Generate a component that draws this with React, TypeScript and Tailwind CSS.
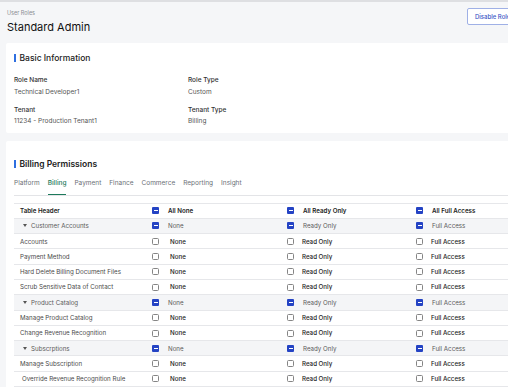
import React from 'react'

type Row = {
  label: string
  kind: 'header' | 'group' | 'leaf'
  indent?: boolean
}

const rows: Row[] = [
  { label: 'Table Header', kind: 'header' },
  { label: 'Customer Accounts', kind: 'group' },
  { label: 'Accounts', kind: 'leaf' },
  { label: 'Payment Method', kind: 'leaf' },
  { label: 'Hard Delete Billing Document Files', kind: 'leaf' },
  { label: 'Scrub Sensitive Data of Contact', kind: 'leaf' },
  { label: 'Product Catalog', kind: 'group' },
  { label: 'Manage Product Catalog', kind: 'leaf' },
  { label: 'Change Revenue Recognition', kind: 'leaf' },
  { label: 'Subscrptions', kind: 'group' },
  { label: 'Manage Subscription', kind: 'leaf' },
  { label: 'Override Revenue Recognition Rule', kind: 'leaf', indent: true },
]

const tabs = ['Platform', 'Billing', 'Payment', 'Finance', 'Commerce', 'Reporting', 'Insight']

function Check({ on }: { on: boolean }) {
  if (on) {
    return (
      <span className="flex items-center justify-center w-[7px] h-[7px] rounded-[1px] bg-[#2443c4] shrink-0">
        <span className="block w-[4px] h-[1px] bg-white" />
      </span>
    )
  }
  return <span className="block w-[7px] h-[7px] rounded-[1.5px] border border-[#858585] bg-white shrink-0" />
}

function Cell({ row, text, header, ml }: { row: Row; text: string; header: string; ml: string }) {
  const on = row.kind !== 'leaf'
  const label = row.kind === 'header' ? header : text
  const style =
    row.kind === 'group'
      ? 'text-[#5a5a5a] font-normal ml-[9px]'
      : row.kind === 'header'
        ? 'text-[#222] font-semibold ml-[9px]'
        : `text-[#1a1a1a] font-medium ${ml}`
  return (
    <div className="flex items-center pl-[2px]">
      <Check on={on} />
      <span className={style}>{label}</span>
    </div>
  )
}

function Field({ label, value }: { label: string; value: string }) {
  return (
    <div className="flex flex-col">
      <span className="text-[6.5px] leading-[9px] font-medium text-[#333]">{label}</span>
      <span className="text-[6.5px] leading-[9px] mt-[2.5px] text-[#555]">{value}</span>
    </div>
  )
}

export default function App() {
  return (
    <div className="w-[508px] h-[387px] overflow-hidden" style={{ fontFamily: 'Inter, "Liberation Sans", sans-serif' }}>
      <div className="w-[540px] min-h-[387px] bg-[#f5f6f8] border-t-2 border-[#dedfe2]">
        <div className="flex justify-between pl-[7px] pr-[11px] pt-[6px]">
          <div className="flex flex-col">
            <span className="text-[5.5px] leading-[8px] mt-[1px] text-[#8a8d93]">User Roles</span>
            <span className="text-[11px] leading-[14px] mt-[3px] text-[#111]">Standard Admin</span>
          </div>
          <button className="w-[62px] h-[17px] border border-[#9fb0e6] rounded-[2px] bg-white text-[6px] font-medium text-[#3a56c6] text-left pl-[7px] whitespace-nowrap">
            Disable Role
          </button>
        </div>

        <div className="ml-[6px] mt-[9px] bg-white rounded-[2px] h-[90px] pt-[10px] pl-[8px]">
          <div className="flex items-center h-[10px]">
            <span className="block w-[1.5px] h-[8px] bg-[#2f6fe0]" />
            <span className="ml-[4px] text-[8.5px] font-medium text-[#222]">Basic Information</span>
          </div>
          <div className="grid grid-cols-[174px_1fr] gap-y-[9px] mt-[13px]">
            <Field label="Role Name" value="Technical Developer1" />
            <Field label="Role Type" value="Custom" />
            <Field label="Tenant" value="11234 - Production Tenant1" />
            <Field label="Tenant Type" value="Billing" />
          </div>
        </div>

        <div className="ml-[6px] mt-[8px] bg-white rounded-[2px] pt-[18px] pl-[8px] h-[260px]">
          <div className="flex items-center h-[10px]">
            <span className="block w-[1.5px] h-[8px] bg-[#2f6fe0]" />
            <span className="ml-[4px] text-[8.5px] font-semibold text-[#222]">Billing Permissions</span>
          </div>
          <div className="flex gap-[8px] mt-[10px] border-b border-[#e3e4e7] text-[6.5px] text-[#6b6f76]">
            {tabs.map((t) => (
              <span
                key={t}
                className={
                  t === 'Billing'
                    ? 'h-[15.5px] leading-[8px] border-b-[1.5px] border-[#1d7a5b] text-[#1d7a5b] font-medium'
                    : 'h-[15.5px] leading-[8px]'
                }
              >
                {t}
              </span>
            ))}
          </div>
          <div className="mt-[7px] border-t border-[#e6e7ea] text-[6.2px]">
            {rows.map((r) => (
              <div
                key={r.label}
                className={`grid grid-cols-[136px_135px_129px_1fr] items-center h-[15.3px] border-b border-[#e6e7ea] ${
                  r.kind === 'group' ? 'bg-[#f4f5f7]' : 'bg-white'
                }`}
              >
                <div
                  className={`flex items-center ${
                    r.kind === 'group'
                      ? 'pl-[9px] text-[#5a5a5a]'
                      : r.kind === 'header'
                        ? 'pl-[6px] text-[#222] font-semibold'
                        : r.indent
                          ? 'pl-[8px] text-[#4a4a4a]'
                          : 'pl-[6px] text-[#4a4a4a]'
                  }`}
                >
                  {r.kind === 'group' && (
                    <svg width="4" height="3" viewBox="0 0 4 3" className="mr-[4px]">
                      <path d="M0 0H4L2 3Z" fill="#555" />
                    </svg>
                  )}
                  <span>{r.label}</span>
                </div>
                <Cell row={r} text="None" header="All None" ml="ml-[11px]" />
                <Cell row={r} text={r.kind === 'group' ? 'Ready Only' : 'Read Only'} header="All Ready Only" ml="ml-[8px]" />
                <Cell row={r} text="Full Access" header="All Full Access" ml="ml-[8px]" />
              </div>
            ))}
          </div>
        </div>
      </div>
    </div>
  )
}
